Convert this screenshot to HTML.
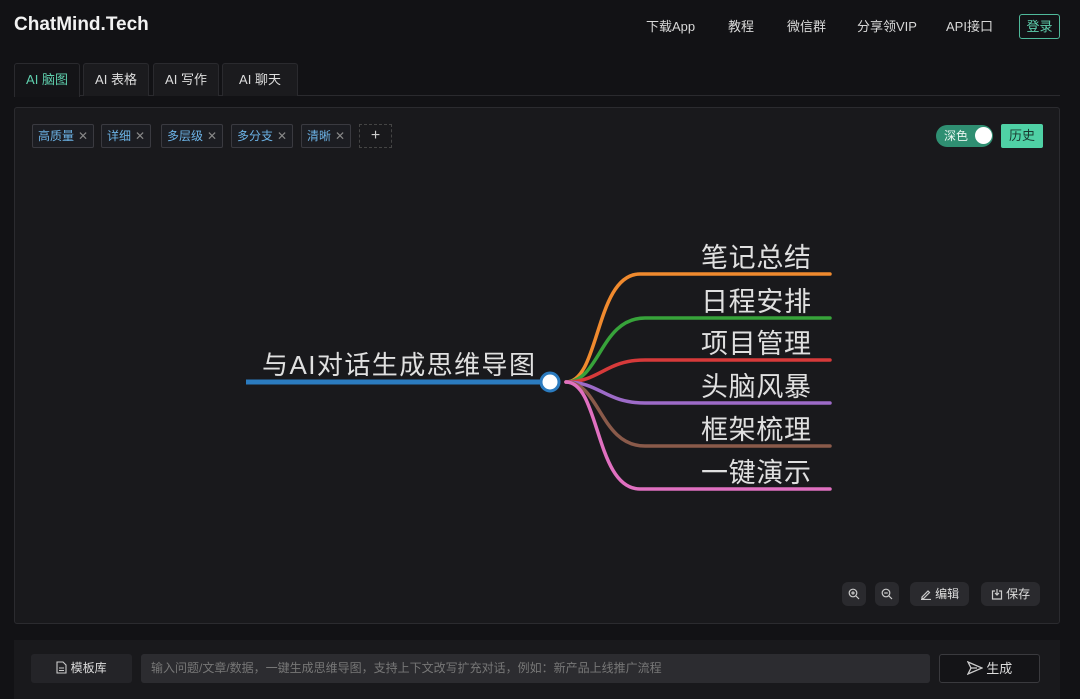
<!DOCTYPE html>
<html><head><meta charset="utf-8"><style>
*{margin:0;padding:0;box-sizing:border-box}
body{width:1080px;height:699px;background:#121215;font-family:"Liberation Sans","Noto Sans CJK SC",sans-serif;color:#ddd;position:relative;overflow:hidden}
.a{position:absolute}
.logo{left:14px;top:14px;font-size:19px;font-weight:bold;color:#f2f2f2}
.nav{top:16px;font-size:13px;color:#d8d8d8}
.login{left:1019px;top:14px;width:41px;height:25px;border:1px solid #4fb99a;border-radius:3px;color:#5fd0ae;font-size:13px;text-align:center;line-height:23px}
.tab{top:63px;height:33px;background:#1b1b1e;border:1px solid #2a2a2e;border-bottom:none;font-size:13px;color:#ddd;text-align:center;line-height:31px;border-radius:3px 3px 0 0}
.panel{left:14px;top:107px;width:1046px;height:517px;background:#19191c;border:1px solid #2b2b2f;border-radius:3px}
.tag{top:124px;height:24px;border:1px solid #3a3a40;background:#1c1d22;font-size:12px;color:#6cb3e6;line-height:22px;padding:0 5px;border-radius:2px}
.tag span{color:#888;margin-left:4px}
.btn{background:#2a2a2e;border-radius:6px;font-size:12px;color:#ddd;text-align:center;line-height:24px;height:24px;top:582px}
.btn svg{vertical-align:-2px}
</style></head><body>
<div class="a logo">ChatMind.Tech</div>
<div class="a nav" style="left:646px">下载App</div>
<div class="a nav" style="left:728px">教程</div>
<div class="a nav" style="left:787px">微信群</div>
<div class="a nav" style="left:857px">分享领VIP</div>
<div class="a nav" style="left:946px">API接口</div>
<div class="a login">登录</div>
<div class="a" style="left:14px;top:95px;width:1046px;height:1px;background:#2a2a2e"></div>
<div class="a tab" style="left:14px;width:66px;color:#5fd0ae;background:#141417;height:34px">AI 脑图</div>
<div class="a tab" style="left:83px;width:66px">AI 表格</div>
<div class="a tab" style="left:153px;width:66px">AI 写作</div>
<div class="a tab" style="left:222px;width:76px">AI 聊天</div>
<div class="a panel"></div>
<div class="a tag" style="left:32px">高质量<span>✕</span></div>
<div class="a tag" style="left:101px">详细<span>✕</span></div>
<div class="a tag" style="left:161px">多层级<span>✕</span></div>
<div class="a tag" style="left:231px">多分支<span>✕</span></div>
<div class="a tag" style="left:301px">清晰<span>✕</span></div>
<div class="a" style="left:359px;top:124px;width:33px;height:24px;border:1px dashed #444;color:#ccc;text-align:center;line-height:22px;font-size:16px">+</div>
<div class="a" style="left:936px;top:125px;width:57px;height:22px;border-radius:11px;background:#2f8f72;font-size:12px;color:#e8f5f0;line-height:22px;padding-left:8px">深色</div>
<div class="a" style="left:975px;top:127px;width:17px;height:17px;border-radius:50%;background:#fff"></div>
<div class="a" style="left:1001px;top:124px;width:42px;height:24px;background:#4fd1a5;color:#1a3a30;font-size:13px;text-align:center;line-height:24px;border-radius:2px">历史</div>
<svg class="a" style="left:0;top:0" width="1080" height="699" fill="none" stroke-width="3.5" stroke-linecap="round">
<path d="M566 382 C600 382 595 274 640 274 H830" stroke="#f08a2e"/>
<path d="M566 382 C600 382 600 318 645 318 H830" stroke="#37a33a"/>
<path d="M566 382 C600 382 605 360 645 360 H830" stroke="#d73a3a"/>
<path d="M566 382 C600 382 605 403 645 403 H830" stroke="#9d6bc8"/>
<path d="M566 382 C600 382 600 446 645 446 H830" stroke="#8a5a4a"/>
<path d="M566 382 C600 382 595 489 640 489 H830" stroke="#e070c0"/>
<line x1="246" y1="382" x2="548" y2="382" stroke="#2b7bbf" stroke-width="5" stroke-linecap="butt"/>
<circle cx="550" cy="382" r="9" fill="#fff" stroke="#2b7bbf" stroke-width="3"/>
<g font-family="Liberation Sans,Noto Sans CJK SC,sans-serif" font-size="27" fill="#e0e0e0" stroke="none">
<text x="701" y="267" textLength="110">笔记总结</text>
<text x="701" y="311" textLength="110">日程安排</text>
<text x="701" y="353" textLength="110">项目管理</text>
<text x="701" y="396" textLength="110">头脑风暴</text>
<text x="701" y="439" textLength="110">框架梳理</text>
<text x="701" y="482" textLength="110">一键演示</text>
<text x="262" y="374" font-size="26" textLength="273">与AI对话生成思维导图</text>
</g>
</svg>
<div class="a btn" style="left:842px;width:24px"><svg width="12" height="12" viewBox="0 0 12 12" fill="none" stroke="#ccc" stroke-width="1.2"><circle cx="5" cy="5" r="3.8"/><path d="M8 8l3 3M3.2 5h3.6M5 3.2v3.6"/></svg></div>
<div class="a btn" style="left:875px;width:24px"><svg width="12" height="12" viewBox="0 0 12 12" fill="none" stroke="#ccc" stroke-width="1.2"><circle cx="5" cy="5" r="3.8"/><path d="M8 8l3 3M3.2 5h3.6"/></svg></div>
<div class="a btn" style="left:910px;width:59px"><svg width="12" height="12" viewBox="0 0 12 12" fill="none" stroke="#ccc" stroke-width="1.2"><path d="M2 9l6-6 1.5 1.5-6 6H2z M1 11.5h10"/></svg> 编辑</div>
<div class="a btn" style="left:981px;width:59px"><svg width="12" height="12" viewBox="0 0 12 12" fill="none" stroke="#ccc" stroke-width="1.2"><path d="M4 3H1.5v8h9V3H8 M6 1v6 M4 5l2 2 2-2"/></svg> 保存</div>
<div class="a" style="left:14px;top:640px;width:1046px;height:59px;background:#19191c"></div>
<div class="a" style="left:31px;top:654px;width:101px;height:29px;background:#242428;border-radius:3px;font-size:12px;color:#ddd;text-align:center;line-height:29px"><svg width="11" height="13" viewBox="0 0 11 13" fill="none" stroke="#ccc" stroke-width="1.1" style="vertical-align:-2px"><path d="M1 1h6l3 3v8H1z M3 7h5 M3 9.5h5"/></svg> 模板库</div>
<div class="a" style="left:141px;top:654px;width:789px;height:29px;background:#2c2c30;border-radius:3px;font-size:12px;color:#777;line-height:29px;padding-left:10px">输入问题/文章/数据，一键生成思维导图，支持上下文改写扩充对话，例如：新产品上线推广流程</div>
<div class="a" style="left:939px;top:654px;width:101px;height:29px;border:1px solid #3a3a3e;background:#141417;border-radius:3px;font-size:13px;color:#ddd;text-align:center;line-height:27px"><svg width="16" height="14" viewBox="0 0 16 14" fill="none" stroke="#ccc" stroke-width="1.3" style="vertical-align:-2px"><path d="M1 1l14 6-14 6 3-6z M4 7h6"/></svg> 生成</div>
</body></html>
